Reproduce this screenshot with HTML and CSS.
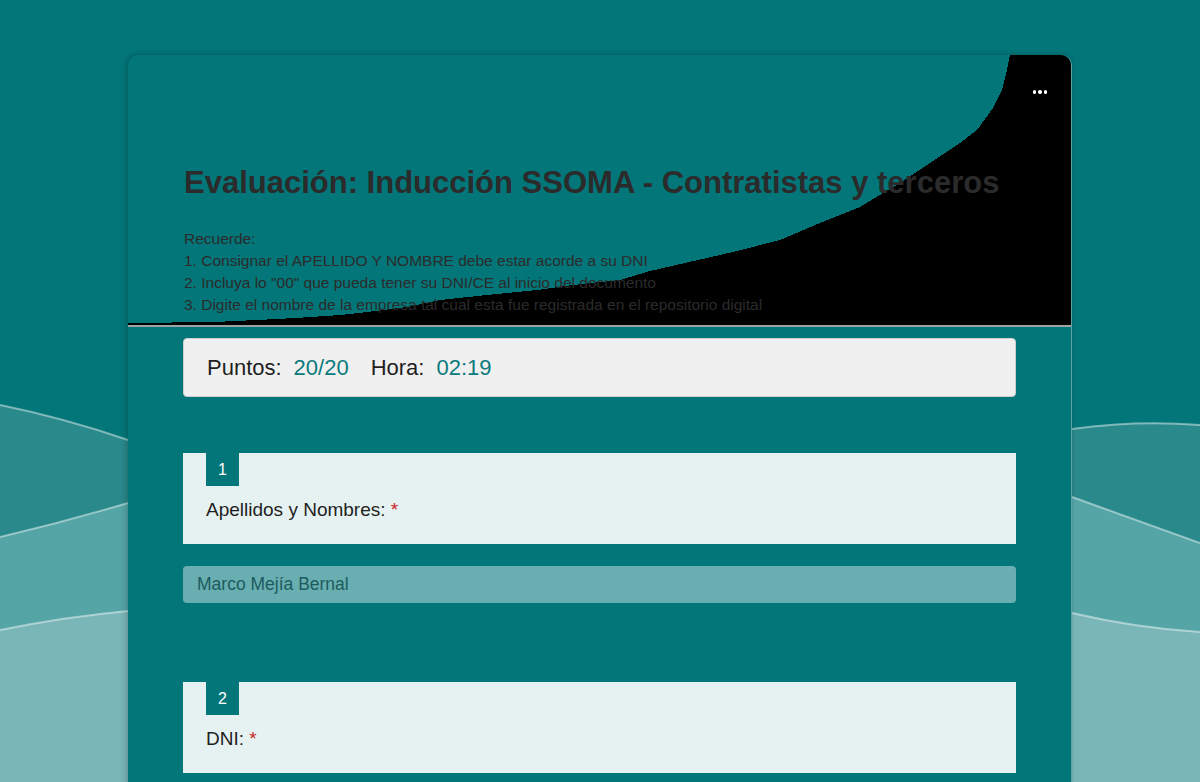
FILE: index.html
```html
<!DOCTYPE html>
<html lang="es">
<head>
<meta charset="utf-8">
<title>Evaluación: Inducción SSOMA</title>
<link rel="stylesheet" href="styles.css">
</head>
<body>
<svg class="bg-waves" width="1200" height="782" viewBox="0 0 1200 782" aria-hidden="true">
  <path class="band1" d="M0,405 Q64,418 128,440 L1072,429 Q1136,420 1200,425 L1200,782 L0,782 Z"/>
  <path class="band2" d="M0,537 Q64,522 128,503 L1072,497 Q1136,520 1200,543 L1200,782 L0,782 Z"/>
  <path class="band3" d="M0,630 Q64,617 128,611 L1072,613 Q1136,628 1200,632 L1200,782 L0,782 Z"/>
  <path class="wline" d="M0,405 Q64,418 128,440 M1072,429 Q1136,420 1200,425"/>
  <path class="wline" d="M0,537 Q64,522 128,503 M1072,497 Q1136,520 1200,543"/>
  <path class="wline" d="M0,630 Q64,617 128,611 M1072,613 Q1136,628 1200,632"/>
</svg>
<main class="form-card">
  <header class="form-header">
    <svg class="header-shape" width="944" height="270" viewBox="0 0 944 270" shape-rendering="crispEdges" aria-hidden="true">
      <path d="M0,268 L87,267 L129,265 L167,263 L212,260 L239,257 L279,252 L312,245 L359,240 L409,235 L445,230 L492,225 L522,216 L605,197 L652,185 L692,168 L732,152 L772,128 L802,108 L832,88 L849,75 L865,53 L874,35 L879,15 L882,0 L944,0 L944,270 L0,270 Z" fill="#000"/>
    </svg>
    <button class="more-btn" aria-label="Más opciones"><span></span><span></span><span></span></button>
    <div class="header-text">
      <h1 class="form-title">Evaluación: Inducción SSOMA - Contratistas y terceros</h1>
      <div class="form-desc">
        <div>Recuerde:</div>
        <div>1. Consignar el APELLIDO Y NOMBRE debe estar acorde a su DNI</div>
        <div>2. Incluya lo "00" que pueda tener su DNI/CE al inicio del documento</div>
        <div>3. Digite el nombre de la empresa tal cual esta fue registrada en el repositorio digital</div>
      </div>
    </div>
  </header>
  <section class="form-body">
    <div class="score-box">
      <span class="label">Puntos:</span><span class="value">20/20</span>
      <span class="label hora">Hora:</span><span class="value">02:19</span>
    </div>

    <div class="question q-first">
      <div class="q-num">1</div>
      <div class="q-title">Apellidos y Nombres: <span class="req">*</span></div>
    </div>
    <div class="answer">Marco Mejía Bernal</div>

    <div class="question q-second">
      <div class="q-num">2</div>
      <div class="q-title">DNI: <span class="req">*</span></div>
    </div>
  </section>
</main>
</body>
</html>
```

FILE: styles.css
```css
html, body {
  margin: 0;
  padding: 0;
}
body {
  width: 1200px;
  height: 782px;
  overflow: hidden;
  background: #037679;
  font-family: "Liberation Sans", Arial, sans-serif;
  position: relative;
}
.bg-waves {
  position: absolute;
  left: 0;
  top: 0;
  z-index: 0;
}
.band1 { fill: #2a898b; }
.band2 { fill: #55a5a7; }
.band3 { fill: #7ab6b8; }
.wline {
  fill: none;
  stroke: rgba(255, 255, 255, 0.45);
  stroke-width: 2;
}
.form-card {
  position: relative;
  z-index: 1;
  width: 944px;
  margin: 55px 0 0 128px;
  background: #037679;
  border-radius: 10px 10px 0 0;
  border-right: 1px solid #5fa3a5;
  box-shadow: -2px 0 6px rgba(0, 0, 0, 0.18), 0 -1px 3px rgba(0, 0, 0, 0.08);
  min-height: 760px;
  box-sizing: border-box;
}
.form-header {
  position: relative;
  height: 270px;
  border-bottom: 2px solid #9aa6a6;
  border-radius: 10px 10px 0 0;
  overflow: hidden;
}
.header-shape {
  position: absolute;
  left: 0;
  top: 0;
  display: block;
}
.more-btn {
  position: absolute;
  top: 35px;
  right: 24px;
  background: none;
  border: 0;
  padding: 0;
  display: flex;
  gap: 1.8px;
  cursor: pointer;
}
.more-btn span {
  width: 3.5px;
  height: 3.5px;
  border-radius: 50%;
  background: #fff;
  display: block;
}
.header-text {
  position: relative;
  padding: 110px 56px 0 56px;
}
.form-title {
  margin: 0;
  font-size: 31px;
  line-height: 36px;
  font-weight: bold;
  color: #2b2b2b;
  white-space: nowrap;
}
.form-desc {
  margin-top: 27px;
  font-size: 15.5px;
  line-height: 22px;
  color: #2b2b2b;
}
.form-body {
  padding: 11px 55px 0 55px;
}
.score-box {
  height: 59px;
  box-sizing: border-box;
  background: #f0f0f0;
  border: 1px solid #cfcfcf;
  border-radius: 4px;
  padding: 0 23px;
  display: flex;
  align-items: center;
  font-size: 22px;
  color: #1f1f1f;
}
.score-box .value {
  color: #0a7b7d;
  margin-left: 12px;
}
.score-box .hora {
  margin-left: 22px;
}
.question {
  background: #e6f2f2;
  height: 91px;
  box-sizing: border-box;
  padding: 0 23px;
}
.q-first {
  margin-top: 56px;
}
.q-second {
  margin-top: 79px;
}
.q-num {
  width: 33px;
  height: 33px;
  background: #037679;
  color: #fff;
  font-size: 16px;
  display: flex;
  align-items: center;
  justify-content: center;
}
.q-title {
  margin-top: 12px;
  font-size: 19px;
  line-height: 24px;
  color: #1f1f1f;
}
.req {
  color: #c62828;
}
.answer {
  margin-top: 22px;
  height: 37px;
  box-sizing: border-box;
  background: #69aeb0;
  border-radius: 4px;
  padding: 0 14px;
  display: flex;
  align-items: center;
  font-size: 17.5px;
  color: #1c5c5e;
}
```
